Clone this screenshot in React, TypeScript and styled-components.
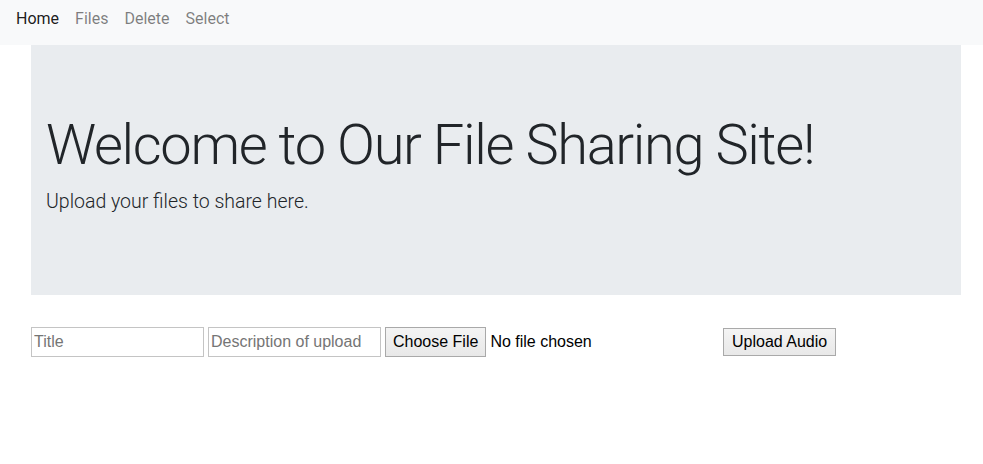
import React from 'react';
import styled, { createGlobalStyle } from 'styled-components';

const GlobalStyle = createGlobalStyle`
   html, body {
      margin: 0;
      padding: 0;
      background: #fff;
      font-family: Roboto, "Liberation Sans", Arial, sans-serif;
      color: #212529;
   }
`;

const Nav = styled.nav`
   display: flex;
   align-items: center;
   gap: 16px;
   height: 45px;
   padding: 0 16px 9px;
   box-sizing: border-box;
   background-color: #f8f9fa;
`;

const NavLink = styled.a<{ $active?: boolean }>`
   font-size: 16px;
   font-weight: 400;
   text-decoration: none;
   color: ${(p) => (p.$active ? 'rgba(0, 0, 0, 0.9)' : 'rgba(0, 0, 0, 0.5)')};
`;

const Main = styled.main`
   padding: 0 22px 0 31px;
`;

const Jumbotron = styled.section`
   margin: 0 0 32px;
   height: 250px;
   box-sizing: border-box;
   padding: 67px 15px 0;
   background-color: #e9ecef;
`;

const Title = styled.h1`
   margin: 0 0 8px;
   font-size: 56px;
   font-weight: 300;
   line-height: 1.2;
   letter-spacing: -1.35px;
`;

const Lead = styled.p`
   margin: 0;
   font-size: 19.5px;
   font-weight: 300;
   line-height: 1.5;
`;

const Form = styled.form`
   display: flex;
   align-items: center;
   gap: 4px;
   font-family: "Liberation Sans", Arial, sans-serif;
   font-size: 16px;
`;

const TextInput = styled.input`
   width: 173px;
   height: 30px;
   box-sizing: border-box;
   padding: 1px 2px;
   border: 1px solid #c4c4c4;
   border-radius: 0;
   font-family: inherit;
   font-size: 16px;
   color: #000;

   &::placeholder {
      color: #757575;
   }
`;

const FilePicker = styled.label`
   display: flex;
   align-items: center;
   gap: 4px;
   width: 334px;
   color: #000;
`;

const NativeButton = styled.button<{ $h?: number; $pad?: number }>`
   display: inline-flex;
   align-items: center;
   height: ${(p) => p.$h ?? 30}px;
   padding: 0 ${(p) => p.$pad ?? 8}px;
   box-sizing: border-box;
   border: 1px solid #a9a9a9;
   border-radius: 0;
   background: linear-gradient(#f4f4f4, #e8e8e8);
   font-family: inherit;
   font-size: 16px;
   color: #000;
`;

const HiddenFile = styled.input`
   display: none;
`;

const App = () => {
   return (
      <>
         <GlobalStyle />
         <Nav>
            <NavLink href='#' $active>Home</NavLink>
            <NavLink href='#'>Files</NavLink>
            <NavLink href='#'>Delete</NavLink>
            <NavLink href='#'>Select</NavLink>
         </Nav>
         <Main>
            <Jumbotron>
               <Title>Welcome to Our File Sharing Site!</Title>
               <Lead>Upload your files to share here.</Lead>
            </Jumbotron>
            <Form onSubmit={(e) => e.preventDefault()}>
               <TextInput type='text' placeholder='Title' />
               <TextInput type='text' placeholder='Description of upload' />
               <FilePicker>
                  <NativeButton type='button' as='span' $pad={7}>
                     Choose File
                  </NativeButton>
                  No file chosen
                  <HiddenFile type='file' />
               </FilePicker>
               <NativeButton type='submit' $h={28}>Upload Audio</NativeButton>
            </Form>
         </Main>
      </>
   );
};

export default App;
